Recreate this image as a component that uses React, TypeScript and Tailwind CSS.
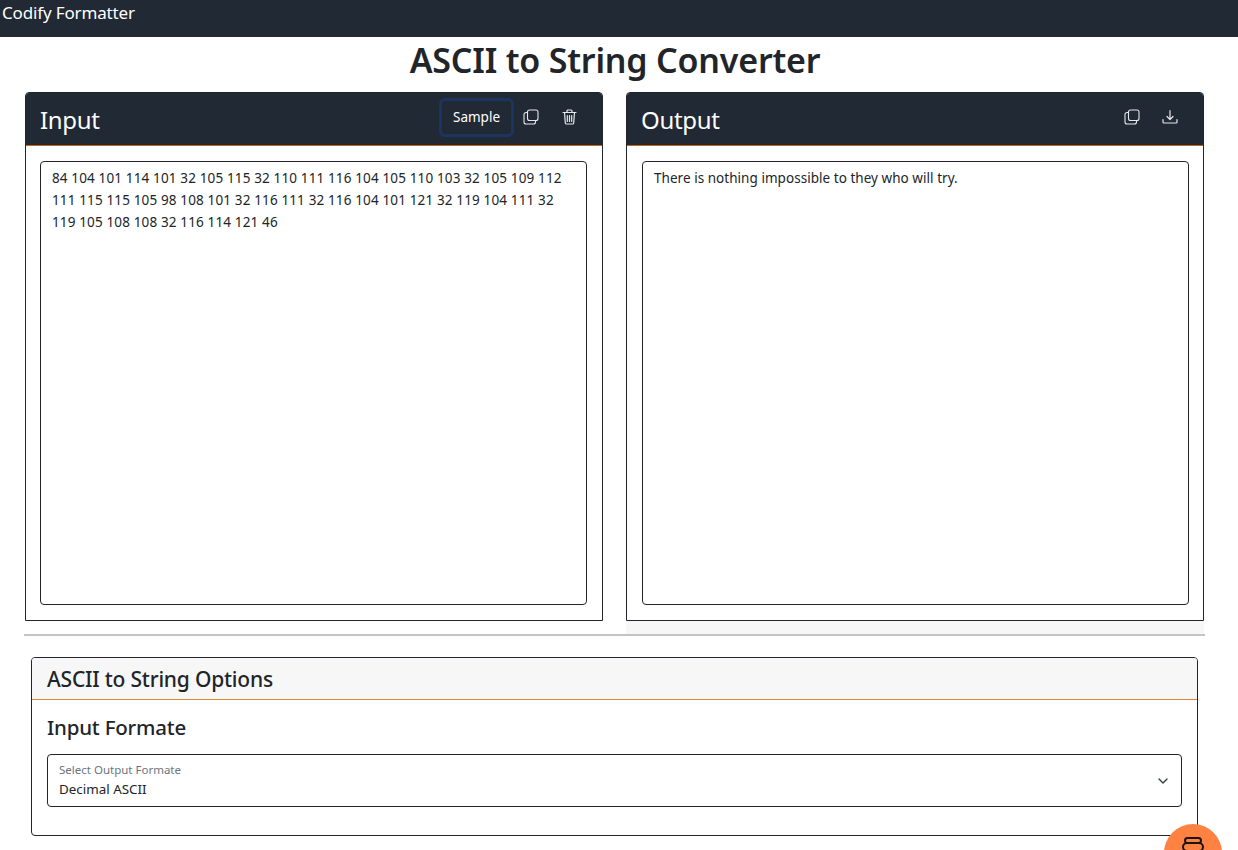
import { ChevronDown } from 'lucide-react';

const font = { fontFamily: '"Noto Sans", "Open Sans", sans-serif' };

const input =
  '84 104 101 114 101 32 105 115 32 110 111 116 104 105 110 103 32 105 109 112 111 115 115 105 98 108 101 32 116 111 32 116 104 101 121 32 119 104 111 32 119 105 108 108 32 116 114 121 46';

function IconBtn({ children }: { children: React.ReactNode }) {
  return <button className="w-[38px] h-[38px] flex items-center justify-center text-gray-200">{children}</button>;
}

function CopyIcon() {
  return (
    <svg width="16" height="16" viewBox="0 0 16 16" fill="none" stroke="currentColor" strokeWidth="1.1">
      <rect x="4.500" y="1" width="10.500" height="10.500" rx="2" />
      <path d="M4.500 3.500H3a2 2 0 0 0-2 2V13a2 2 0 0 0 2 2h7.500a2 2 0 0 0 2-2v-1.500" />
    </svg>
  );
}

function TrashIcon() {
  return (
    <svg width="15" height="16" viewBox="0 0 15 16" fill="none" stroke="currentColor" strokeWidth="1.2" strokeLinecap="round">
      <path d="M1 3.500h13M5 3.500V2a1 1 0 0 1 1-1h3a1 1 0 0 1 1 1v1.500" />
      <path d="M2.500 3.500l.8 10.500a1.200 1.200 0 0 0 1.200 1h6a1.200 1.200 0 0 0 1.200-1l.8-10.500" />
      <path d="M5.300 6.500v6M7.500 6.500v6M9.700 6.500v6" />
    </svg>
  );
}

function DownloadIcon() {
  return (
    <svg width="16" height="16" viewBox="0 0 16 16" fill="none" stroke="currentColor" strokeWidth="1.2" strokeLinecap="round" strokeLinejoin="round">
      <path d="M8 1.500v8.500M5 7.500L8 10.500l3-3" />
      <path d="M1 10.500v2.500a1 1 0 0 0 1 1h12a1 1 0 0 0 1-1v-2.500" />
    </svg>
  );
}

function Panel({ title, text, actions, shadow, bodyClass, textClass }: { title: string; text: string; actions: React.ReactNode; shadow?: boolean; bodyClass: string; textClass: string }) {
  return (
    <div className="w-[578px] relative">
      <div className="h-[529px] flex flex-col border border-[#212529] rounded-t-[4px] bg-white">
        <div className="h-[53px] shrink-0 bg-[#212934] rounded-t-[3px] border-b border-[#c4651c] flex items-center justify-between pl-[14px] pr-[14px]">
          <span className="text-[24px] text-white tracking-[-0.3px] mt-[2px]">{title}</span>
          <div className="flex items-center mb-[4px]">{actions}</div>
        </div>
        <div className={bodyClass}>
          <div className={`h-full border border-[#212529] rounded-[4px] px-[11px] py-[5px] text-[13.5px] leading-[22px] text-[#212529] ${textClass}`}>
            {text}
          </div>
        </div>
      </div>
      {shadow && <div className="h-[13px] bg-[#f7f7f7]" />}
    </div>
  );
}

export default function App() {
  return (
    <div className="h-[850px] overflow-hidden relative bg-white text-[#212529]" style={font}>
      <nav className="h-[37px] bg-[#212934] flex items-center pl-[2px] pb-[11px] text-white text-[17px] tracking-[-0.15px]">Codify Formatter</nav>
      <h1 className="text-center text-[34px] leading-[48px] font-semibold -mt-[1px] pr-[8px] tracking-[-0.2px]">ASCII to String Converter</h1>

      <div className="flex gap-[23px] pl-[25px] mt-[8px] h-[542px]">
        <Panel
          title="Input"
          text={input}
          bodyClass="flex-1 pt-[15px] pb-[15px] pl-[14px] pr-[15px]"
          textClass="tracking-[0.14px]"
          actions={
            <>
              <button className="h-[39px] w-[75px] mr-[-2px] rounded-[6px] border-[3px] border-[#1c3560] text-white text-[13.5px]">Sample</button>
              <IconBtn><CopyIcon /></IconBtn>
              <IconBtn><TrashIcon /></IconBtn>
            </>
          }
        />
        <Panel
          title="Output"
          text="There is nothing impossible to they who will try."
          bodyClass="flex-1 pt-[15px] pb-[15px] pl-[15px] pr-[14px]"
          textClass="tracking-[0.04px]"
          shadow
          actions={
            <>
              <IconBtn><CopyIcon /></IconBtn>
              <IconBtn><DownloadIcon /></IconBtn>
            </>
          }
        />
      </div>

      <div className="ml-[24px] w-[1181px] h-[2px] bg-[#c4c4c4]" />

      <div className="ml-[31px] mt-[21px] w-[1167px] h-[179px] border border-[#212529] rounded-[4px]">
        <div className="h-[42px] bg-[#f7f7f7] border-b border-[#e0842f] rounded-t-[3px] flex items-center pl-[15px] pt-[2px] text-[21px] font-medium tracking-[-0.2px]">
          ASCII to String Options
        </div>
        <div className="px-[15px]">
          <div className="mt-[12px] text-[20.5px] leading-[30px] font-medium tracking-[-0.2px]">Input Formate</div>
          <div className="mt-[12px] h-[53px] border border-[#212529] rounded-[4px] flex items-center justify-between pl-[11px] pr-[10px]">
            <div>
              <div className="text-[11.5px] leading-[14px] text-[#6c757d]">Select Output Formate</div>
              <div className="text-[13.4px] leading-[20px] mt-[2px]">Decimal ASCII</div>
            </div>
            <ChevronDown size={16} strokeWidth={2} className="text-[#343a40]" />
          </div>
        </div>
      </div>

      <div className="absolute left-[1164px] top-[824px] w-[58px] h-[58px] rounded-full bg-[#ff8243] flex justify-center pt-[12px]">
        <svg width="24" height="20" viewBox="0 0 24 20" fill="none" stroke="#1d1410" strokeWidth="2">
          <rect x="4" y="2" width="16" height="5" rx="2.500" />
          <rect x="2" y="7" width="20" height="8" rx="4" />
        </svg>
      </div>
    </div>
  );
}
